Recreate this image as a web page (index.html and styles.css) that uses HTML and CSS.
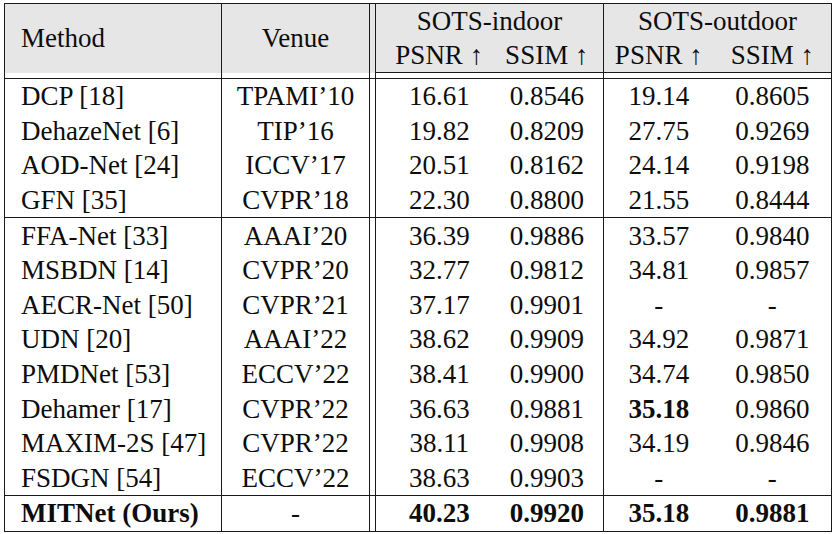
FILE: index.html
```html
<!DOCTYPE html>
<html>
<head>
<meta charset="utf-8">
<link rel="stylesheet" href="styles.css">
</head>
<body>
<table class="results">
  <colgroup>
    <col class="c-method"><col class="c-venue"><col class="c-gap">
    <col class="c-pin"><col class="c-sin"><col class="c-pout"><col class="c-sout">
  </colgroup>
  <thead>
    <tr class="h">
      <th rowspan="2" class="method">Method</th>
      <th rowspan="2" class="venue">Venue</th>
      <th rowspan="2" class="gap"></th>
      <th colspan="2" class="grp">SOTS-indoor</th>
      <th colspan="2">SOTS-outdoor</th>
    </tr>
    <tr class="h">
      <th>PSNR ↑</th><th class="sin">SSIM ↑</th><th>PSNR ↑</th><th>SSIM ↑</th>
    </tr>
  </thead>
  <tbody>
    <tr class="spacer"><td class="method"></td><td class="venue"></td><td class="gap"></td><td></td><td class="sin"></td><td></td><td></td></tr>
    <tr><td class="method">DCP [18]</td><td class="venue">TPAMI’10</td><td class="gap"></td><td>16.61</td><td class="sin">0.8546</td><td>19.14</td><td>0.8605</td></tr>
    <tr><td class="method">DehazeNet [6]</td><td class="venue">TIP’16</td><td class="gap"></td><td>19.82</td><td class="sin">0.8209</td><td>27.75</td><td>0.9269</td></tr>
    <tr><td class="method">AOD-Net [24]</td><td class="venue">ICCV’17</td><td class="gap"></td><td>20.51</td><td class="sin">0.8162</td><td>24.14</td><td>0.9198</td></tr>
    <tr class="last"><td class="method">GFN [35]</td><td class="venue">CVPR’18</td><td class="gap"></td><td>22.30</td><td class="sin">0.8800</td><td>21.55</td><td>0.8444</td></tr>
    <tr><td class="method">FFA-Net [33]</td><td class="venue">AAAI’20</td><td class="gap"></td><td>36.39</td><td class="sin">0.9886</td><td>33.57</td><td>0.9840</td></tr>
    <tr><td class="method">MSBDN [14]</td><td class="venue">CVPR’20</td><td class="gap"></td><td>32.77</td><td class="sin">0.9812</td><td>34.81</td><td>0.9857</td></tr>
    <tr><td class="method">AECR-Net [50]</td><td class="venue">CVPR’21</td><td class="gap"></td><td>37.17</td><td class="sin">0.9901</td><td>-</td><td>-</td></tr>
    <tr><td class="method">UDN [20]</td><td class="venue">AAAI’22</td><td class="gap"></td><td>38.62</td><td class="sin">0.9909</td><td>34.92</td><td>0.9871</td></tr>
    <tr><td class="method">PMDNet [53]</td><td class="venue">ECCV’22</td><td class="gap"></td><td>38.41</td><td class="sin">0.9900</td><td>34.74</td><td>0.9850</td></tr>
    <tr><td class="method">Dehamer [17]</td><td class="venue">CVPR’22</td><td class="gap"></td><td>36.63</td><td class="sin">0.9881</td><td><b>35.18</b></td><td>0.9860</td></tr>
    <tr><td class="method">MAXIM-2S [47]</td><td class="venue">CVPR’22</td><td class="gap"></td><td>38.11</td><td class="sin">0.9908</td><td>34.19</td><td>0.9846</td></tr>
    <tr class="last"><td class="method">FSDGN [54]</td><td class="venue">ECCV’22</td><td class="gap"></td><td>38.63</td><td class="sin">0.9903</td><td>-</td><td>-</td></tr>
    <tr class="ours"><td class="method">MITNet (Ours)</td><td class="venue plain">-</td><td class="gap"></td><td>40.23</td><td class="sin">0.9920</td><td>35.18</td><td>0.9881</td></tr>
  </tbody>
</table>
</body>
</html>
```

FILE: styles.css
```css
html, body {
  margin: 0;
  padding: 0;
  background: #ffffff;
}

body {
  padding: 3px 0 0 4px;
  font-family: "Liberation Serif", "Times New Roman", serif;
  color: #0d0d0d;
}

.results {
  border-collapse: collapse;
  table-layout: fixed;
  width: 827px;
  border: 1px solid #1a1a1a;
  font-size: 27px;
}

.c-method { width: 217px; }
.c-venue { width: 148px; }
.c-gap { width: 6px; }
.c-pin { width: 127px; }
.c-sin { width: 101px; }
.c-pout { width: 110px; }
.c-sout { width: 118px; }

.results th,
.results td {
  padding: 0;
  text-align: center;
  white-space: nowrap;
  font-weight: normal;
  line-height: 30px;
}

.results thead th {
  background: #e6e6e6;
  height: 34px;
}

.results thead tr:last-child th {
  border-bottom: 1px solid #1a1a1a;
}

.results tbody td {
  height: 34.6px;
}

.results .method {
  text-align: left;
  padding-left: 16px;
  border-right: 1px solid #1a1a1a;
}

.results .venue {
  border-right: 1px solid #1a1a1a;
}

.results .gap {
  border-right: 1px solid #1a1a1a;
}

.results .grp,
.results .sin {
  border-right: 1px solid #1a1a1a;
}

.results .sin {
  padding-right: 12px;
}

.results thead .grp {
  padding-right: 0;
}

.results tbody tr.spacer td {
  height: 5px;
  line-height: 5px;
  background: #ffffff;
  border-bottom: 1px solid #1a1a1a;
}

.results tbody tr.last td {
  border-bottom: 1px solid #1a1a1a;
}

.results tr.ours td {
  font-weight: bold;
}

.results tr.ours td.plain {
  font-weight: normal;
}
```
